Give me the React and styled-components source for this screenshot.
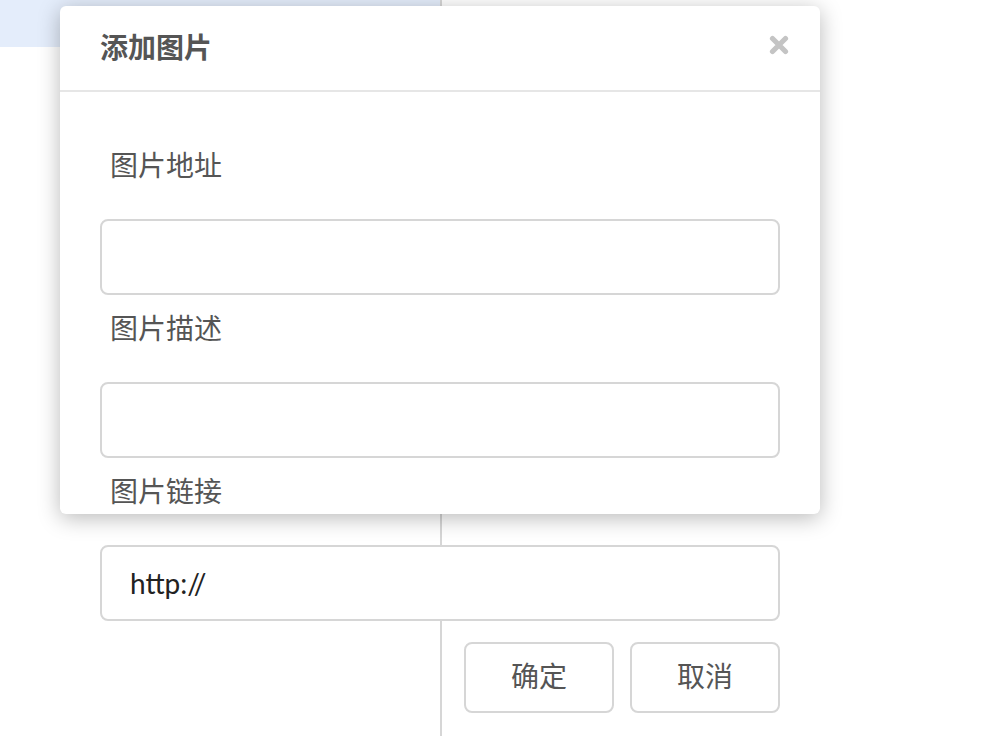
import React from "react"
import styled, { createGlobalStyle } from "styled-components"

const GlobalStyle = createGlobalStyle`
  html, body {
    margin: 0;
    padding: 0;
    background: #fff;
  }
  body {
    font-family: Lato, "Noto Sans CJK SC", sans-serif;
    color: #555;
  }
`

const Page = styled.div`
  position: relative;
  display: flex;
  width: 996px;
  height: 736px;
  overflow: hidden;
  background: #fff;
`

const LeftPane = styled.div`
  width: 440px;
  border-right: 2px solid #d6d6d6;
`

const SelectedRow = styled.div`
  height: 47px;
  background: #e4edfb;
`

const RightPane = styled.div`
  flex: 1;
`

const Modal = styled.div`
  position: absolute;
  left: 60px;
  top: 6px;
  width: 760px;
  height: 508px;
  background: #fff;
  border-radius: 6px;
  box-shadow: 0 4px 22px rgba(0, 0, 0, 0.28);
`

const Header = styled.div`
  display: flex;
  align-items: center;
  justify-content: space-between;
  height: 84px;
  padding: 0 31px 0 40px;
  border-bottom: 2px solid #e6e6e6;
`

const Title = styled.h3`
  margin: -5px 0 0;
  font-size: 28px;
  font-weight: 700;
  color: #555;
`

const CloseButton = styled.button`
  display: flex;
  padding: 0;
  border: 0;
  background: none;
  cursor: pointer;
  margin-top: -6px;
`

const Body = styled.div`
  padding: 56px 40px 0;
`

const Field = styled.div`
  margin-bottom: 16px;
`

const Label = styled.label`
  display: block;
  height: 34px;
  line-height: 34px;
  padding-left: 10px;
  margin-bottom: 37px;
  font-size: 28px;
  color: #555;
`

const Input = styled.input`
  display: block;
  box-sizing: border-box;
  width: 680px;
  height: 76px;
  padding: 0 28px;
  border: 2px solid #d6d6d6;
  border-radius: 8px;
  background: #fff;
  font-family: Lato, "Noto Sans CJK SC", sans-serif;
  font-size: 28px;
  color: #222;
  outline: none;
`

const Footer = styled.div`
  display: flex;
  justify-content: flex-end;
  gap: 16px;
  width: 680px;
  margin-top: 21px;
`

const Button = styled.button`
  box-sizing: border-box;
  width: 150px;
  height: 71px;
  padding: 0 0 5px;
  border: 2px solid #d6d6d6;
  border-radius: 8px;
  background: #fff;
  font-family: Lato, "Noto Sans CJK SC", sans-serif;
  font-size: 28px;
  color: #555;
  cursor: pointer;
`

const CloseIcon = () => (
  <svg width="20" height="20" viewBox="0 0 20 20">
    <path d="M3.5 3.5 L16.5 16.5 M16.5 3.5 L3.5 16.5" stroke="#c4c4c4" strokeWidth="5.2" strokeLinecap="round" />
  </svg>
)

const fields = [
  { label: "图片地址", value: "" },
  { label: "图片描述", value: "" },
  { label: "图片链接", value: "http://" },
]

export default function App() {
  return (
    <>
      <GlobalStyle />
      <Page>
        <LeftPane>
          <SelectedRow />
        </LeftPane>
        <RightPane />
        <Modal>
          <Header>
            <Title>添加图片</Title>
            <CloseButton aria-label="关闭">
              <CloseIcon />
            </CloseButton>
          </Header>
          <Body>
            {fields.map((f) => (
              <Field key={f.label}>
                <Label>{f.label}</Label>
                <Input defaultValue={f.value} />
              </Field>
            ))}
            <Footer>
              <Button>确定</Button>
              <Button>取消</Button>
            </Footer>
          </Body>
        </Modal>
      </Page>
    </>
  )
}
